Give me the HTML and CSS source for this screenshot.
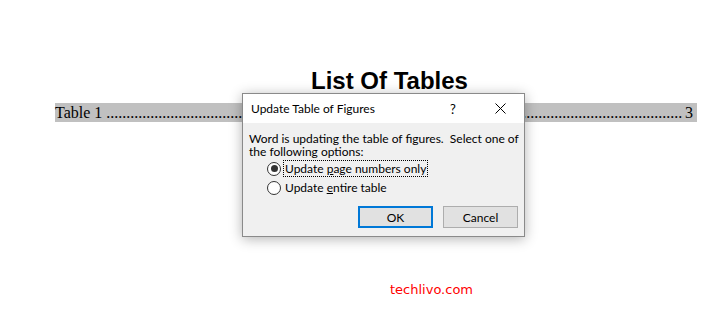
FILE: index.html
```html
<!DOCTYPE html>
<html lang="en">

<head>
    <meta charset="UTF-8">
    <meta name="viewport" content="width=device-width, initial-scale=1.0">
    <title>List Of Tables - Update Table of Figures</title>
    <link rel="stylesheet" href="styles.css">
</head>

<body>
    <div class="page">
        <h1 class="doc-title">List <span class="grammar">Of</span> Tables</h1>
        <div class="toc-row">
            <span class="toc-label">Table 1</span>
            <span class="toc-dots">..............................................................................................................................................................................................................................................</span>
            <span class="toc-page">3</span>
        </div>

        <div class="watermark">techlivo.com</div>

        <div class="dialog">
            <div class="dialog-titlebar">
                <span class="dialog-title">Update Table of Figures</span>
                <span class="dialog-help">?</span>
                <span class="dialog-close">
                    <svg width="11" height="11" viewBox="0 0 11 11">
                        <path d="M0.5 0.5 L10.5 10.5 M10.5 0.5 L0.5 10.5" stroke="#000" stroke-width="1" fill="none"/>
                    </svg>
                </span>
            </div>
            <div class="dialog-body">
                <p class="dialog-text">Word is updating the table of figures.&nbsp; Select one of the following options:</p>
                <div class="options">
                    <label class="option">
                        <span class="radio checked"></span>
                        <span class="option-text focused">Update <u>p</u>age numbers only</span>
                    </label>
                    <label class="option">
                        <span class="radio"></span>
                        <span class="option-text">Update <u>e</u>ntire table</span>
                    </label>
                </div>
                <div class="buttons">
                    <button class="btn btn-default">OK</button>
                    <button class="btn">Cancel</button>
                </div>
            </div>
        </div>
    </div>
</body>

</html>
```

FILE: styles.css
```css
body {
    margin: 0;
    padding: 0;
    background: white;
}

.page {
    position: relative;
    width: 709px;
    height: 321px;
    padding-top: 67px;
    box-sizing: border-box;
}

.doc-title {
    margin: 0 0 8px 0;
    padding-left: 311px;
    font-family: "Liberation Sans", Arial, sans-serif;
    font-size: 24px;
    font-weight: bold;
    line-height: 28px;
    color: #000;
}

.grammar {
    text-decoration: underline dotted #3b3bd4;
    text-decoration-thickness: 2px;
    text-underline-offset: 4px;
}

.toc-row {
    display: flex;
    align-items: baseline;
    margin-left: 55px;
    width: 642px;
    height: 19px;
    background: #c0c0c0;
    font-family: "Liberation Serif", "Times New Roman", serif;
    font-size: 16px;
    line-height: 19px;
    color: #000;
}

.toc-label {
    white-space: nowrap;
    padding-right: 4px;
}

.toc-dots {
    flex: 1;
    min-width: 0;
    overflow: hidden;
    white-space: nowrap;
}

.toc-page {
    padding: 0 4px 0 2px;
}

.watermark {
    margin-top: 160px;
    padding-left: 390px;
    font-family: "DejaVu Sans", Verdana, sans-serif;
    font-size: 13px;
    color: #ff0000;
}

.dialog {
    position: absolute;
    left: 242px;
    top: 93px;
    width: 283px;
    height: 144px;
    box-sizing: border-box;
    border: 1px solid #8a8a8a;
    background: #f0f0f0;
    box-shadow: 0 2px 12px rgba(0, 0, 0, 0.3);
    font-family: Lato, "Segoe UI", sans-serif;
    font-size: 12px;
    color: #000;
}

.dialog-titlebar {
    display: flex;
    align-items: center;
    height: 29px;
    background: white;
    padding-left: 8px;
}

.dialog-title {
    flex: 1;
}

.dialog-help {
    width: 38px;
    font-size: 13px;
}

.dialog-close {
    width: 24px;
    display: flex;
    justify-content: center;
    padding-right: 12px;
}

.dialog-body {
    padding: 9px 0 0 6px;
}

.dialog-text {
    margin: 0;
    line-height: 13px;
}

.options {
    display: flex;
    flex-direction: column;
    gap: 4px;
    margin-top: 3px;
    padding-left: 18px;
}

.option {
    display: flex;
    align-items: center;
    gap: 2px;
    height: 15px;
}

.radio {
    width: 12px;
    height: 12px;
    border: 1px solid #333;
    border-radius: 50%;
    background: white;
    position: relative;
}

.radio.checked::after {
    content: "";
    position: absolute;
    left: 2.5px;
    top: 2.5px;
    width: 7px;
    height: 7px;
    border-radius: 50%;
    background: #333;
}

.option-text {
    padding: 0 1px;
    border: 1px dotted transparent;
}

.option-text.focused {
    border-color: #000;
}

.buttons {
    display: flex;
    justify-content: flex-end;
    gap: 10px;
    margin-top: 11px;
    padding-right: 6px;
}

.btn {
    width: 75px;
    height: 22px;
    box-sizing: border-box;
    border: 1px solid #adadad;
    background: #e1e1e1;
    font-family: Lato, "Segoe UI", sans-serif;
    font-size: 12px;
    color: #000;
    padding: 0;
}

.btn-default {
    border: 2px solid #0078d7;
}
```
